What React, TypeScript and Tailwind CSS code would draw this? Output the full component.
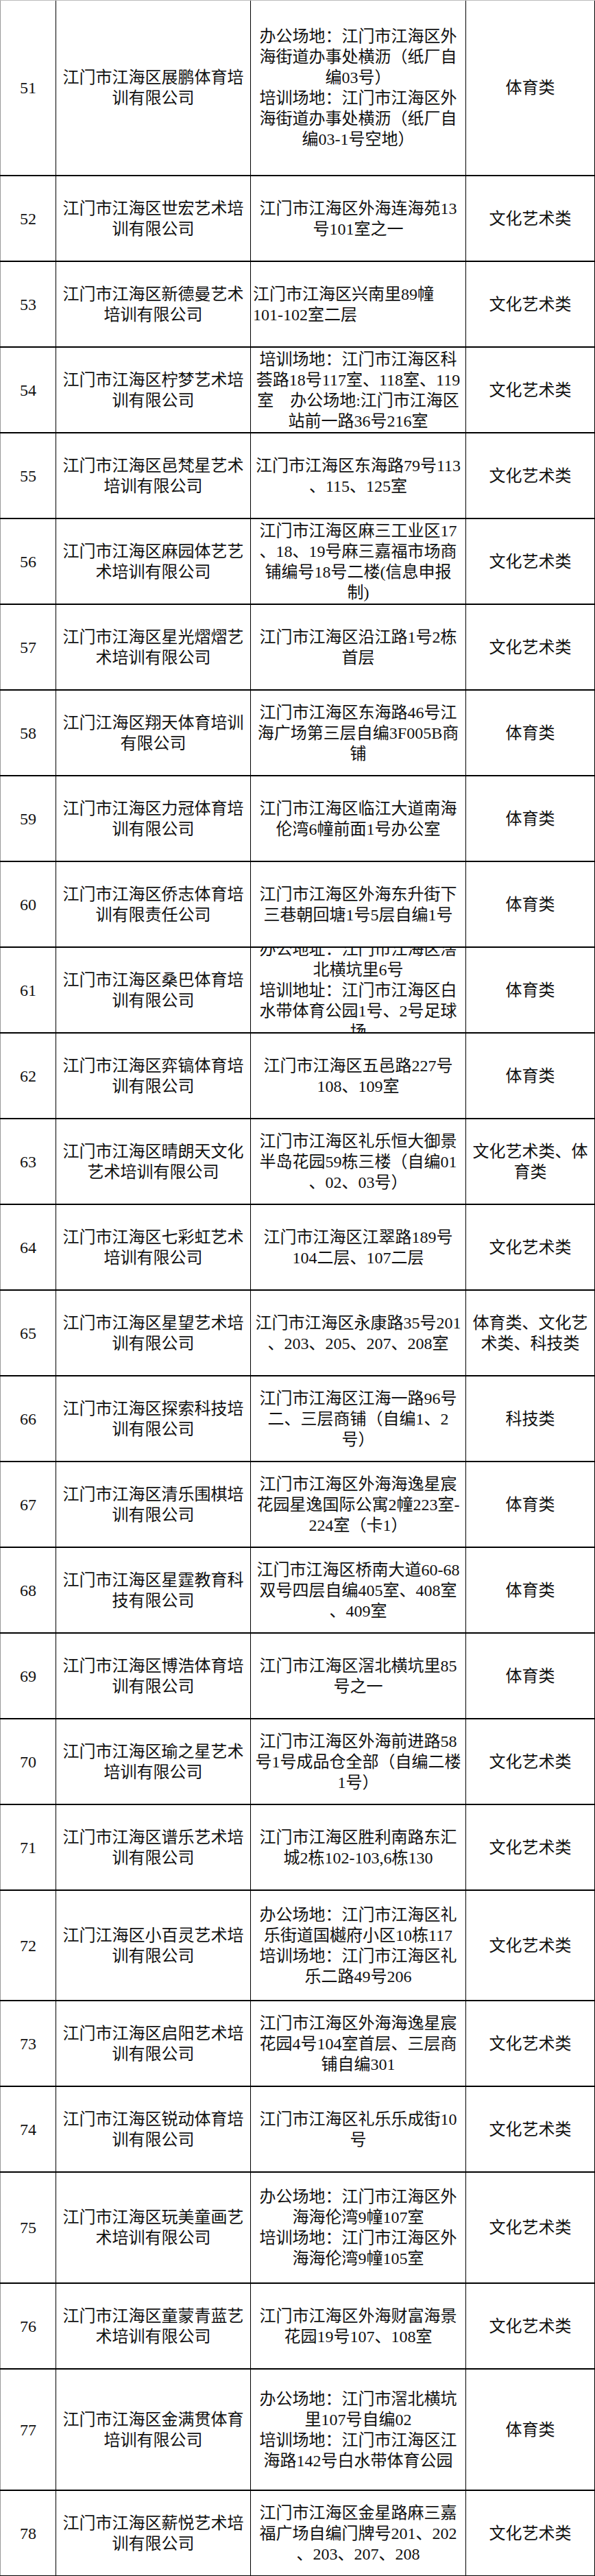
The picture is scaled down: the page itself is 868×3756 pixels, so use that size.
import React from "react";

// One row of the listing: number, company, address lines, category
interface Row {
  no: number;
  name: string[];
  addr: string[];
  cat: string[];
  h?: string;
  addrLeft?: boolean;
}

const rows: Row[] = [
  {
    no: 51,
    name: ["江门市江海区展鹏体育培", "训有限公司"],
    addr: [
      "办公场地：江门市江海区外",
      "海街道办事处横沥（纸厂自",
      "编03号）",
      "培训场地：江门市江海区外",
      "海街道办事处横沥（纸厂自",
      "编03-1号空地）",
    ],
    cat: ["体育类"],
    h: "h-[256px]",
  },
  { no: 52, name: ["江门市江海区世宏艺术培", "训有限公司"], addr: ["江门市江海区外海连海苑13", "号101室之一"], cat: ["文化艺术类"] },
  {
    no: 53,
    name: ["江门市江海区新德曼艺术", "培训有限公司"],
    addr: ["江门市江海区兴南里89幢", "101-102室二层"],
    cat: ["文化艺术类"],
    addrLeft: true,
  },
  {
    no: 54,
    name: ["江门市江海区柠梦艺术培", "训有限公司"],
    addr: ["培训场地：江门市江海区科", "荟路18号117室、118室、119", "室　办公场地:江门市江海区", "站前一路36号216室"],
    cat: ["文化艺术类"],
  },
  { no: 55, name: ["江门市江海区邑梵星艺术", "培训有限公司"], addr: ["江门市江海区东海路79号113", "、115、125室"], cat: ["文化艺术类"] },
  {
    no: 56,
    name: ["江门市江海区麻园体艺艺", "术培训有限公司"],
    addr: ["江门市江海区麻三工业区17", "、18、19号麻三嘉福市场商", "铺编号18号二楼(信息申报", "制)"],
    cat: ["文化艺术类"],
  },
  { no: 57, name: ["江门市江海区星光熠熠艺", "术培训有限公司"], addr: ["江门市江海区沿江路1号2栋", "首层"], cat: ["文化艺术类"] },
  {
    no: 58,
    name: ["江门江海区翔天体育培训", "有限公司"],
    addr: ["江门市江海区东海路46号江", "海广场第三层自编3F005B商", "铺"],
    cat: ["体育类"],
  },
  { no: 59, name: ["江门市江海区力冠体育培", "训有限公司"], addr: ["江门市江海区临江大道南海", "伦湾6幢前面1号办公室"], cat: ["体育类"] },
  { no: 60, name: ["江门市江海区侨志体育培", "训有限责任公司"], addr: ["江门市江海区外海东升街下", "三巷朝回塘1号5层自编1号"], cat: ["体育类"] },
  {
    no: 61,
    name: ["江门市江海区桑巴体育培", "训有限公司"],
    addr: ["办公地址：江门市江海区滘", "北横坑里6号", "培训地址：江门市江海区白", "水带体育公园1号、2号足球", "场"],
    cat: ["体育类"],
  },
  { no: 62, name: ["江门市江海区弈镐体育培", "训有限公司"], addr: ["江门市江海区五邑路227号", "108、109室"], cat: ["体育类"] },
  {
    no: 63,
    name: ["江门市江海区晴朗天文化", "艺术培训有限公司"],
    addr: ["江门市江海区礼乐恒大御景", "半岛花园59栋三楼（自编01", "、02、03号）"],
    cat: ["文化艺术类、体", "育类"],
  },
  { no: 64, name: ["江门市江海区七彩虹艺术", "培训有限公司"], addr: ["江门市江海区江翠路189号", "104二层、107二层"], cat: ["文化艺术类"] },
  {
    no: 65,
    name: ["江门市江海区星望艺术培", "训有限公司"],
    addr: ["江门市江海区永康路35号201", "、203、205、207、208室"],
    cat: ["体育类、文化艺", "术类、科技类"],
  },
  {
    no: 66,
    name: ["江门市江海区探索科技培", "训有限公司"],
    addr: ["江门市江海区江海一路96号", "二、三层商铺（自编1、2", "号）"],
    cat: ["科技类"],
  },
  {
    no: 67,
    name: ["江门市江海区清乐围棋培", "训有限公司"],
    addr: ["江门市江海区外海海逸星宸", "花园星逸国际公寓2幢223室-", "224室（卡1）"],
    cat: ["体育类"],
  },
  {
    no: 68,
    name: ["江门市江海区星霆教育科", "技有限公司"],
    addr: ["江门市江海区桥南大道60-68", "双号四层自编405室、408室", "、409室"],
    cat: ["体育类"],
  },
  { no: 69, name: ["江门市江海区博浩体育培", "训有限公司"], addr: ["江门市江海区滘北横坑里85", "号之一"], cat: ["体育类"] },
  {
    no: 70,
    name: ["江门市江海区瑜之星艺术", "培训有限公司"],
    addr: ["江门市江海区外海前进路58", "号1号成品仓全部（自编二楼", "1号）"],
    cat: ["文化艺术类"],
  },
  { no: 71, name: ["江门市江海区谱乐艺术培", "训有限公司"], addr: ["江门市江海区胜利南路东汇", "城2栋102-103,6栋130"], cat: ["文化艺术类"] },
  {
    no: 72,
    name: ["江门江海区小百灵艺术培", "训有限公司"],
    addr: ["办公场地：江门市江海区礼", "乐街道国樾府小区10栋117", "培训场地：江门市江海区礼", "乐二路49号206"],
    cat: ["文化艺术类"],
    h: "h-[161px]",
  },
  {
    no: 73,
    name: ["江门市江海区启阳艺术培", "训有限公司"],
    addr: ["江门市江海区外海海逸星宸", "花园4号104室首层、三层商", "铺自编301"],
    cat: ["文化艺术类"],
  },
  { no: 74, name: ["江门市江海区锐动体育培", "训有限公司"], addr: ["江门市江海区礼乐乐成街10", "号"], cat: ["文化艺术类"] },
  {
    no: 75,
    name: ["江门市江海区玩美童画艺", "术培训有限公司"],
    addr: ["办公场地：江门市江海区外", "海海伦湾9幢107室", "培训场地：江门市江海区外", "海海伦湾9幢105室"],
    cat: ["文化艺术类"],
    h: "h-[162px]",
  },
  { no: 76, name: ["江门市江海区童蒙青蓝艺", "术培训有限公司"], addr: ["江门市江海区外海财富海景", "花园19号107、108室"], cat: ["文化艺术类"] },
  {
    no: 77,
    name: ["江门市江海区金满贯体育", "培训有限公司"],
    addr: ["办公场地：江门市滘北横坑", "里107号自编02", "培训场地：江门市江海区江", "海路142号白水带体育公园"],
    cat: ["体育类"],
    h: "h-[177px]",
  },
  {
    no: 78,
    name: ["江门市江海区薪悦艺术培", "训有限公司"],
    addr: ["江门市江海区金星路麻三嘉", "福广场自编门牌号201、202", "、203、207、208"],
    cat: ["文化艺术类"],
  },
];

const Lines = ({ lines }: { lines: string[] }) => (
  <>
    {lines.map((l, i) => (
      <div key={i} className="whitespace-nowrap">
        {l}
      </div>
    ))}
  </>
);

export default function App() {
  return (
    <div className="w-[868px] bg-white text-[#111] font-['Liberation_Serif','Noto_Sans_CJK_SC',serif] text-[24px] leading-[30px]">
      <div className="border-t border-[#bbb]">
        {rows.map((r) => (
          <div key={r.no} className={`flex border-b-2 border-black ${r.h ?? "h-[125px]"}`}>
            <div className="w-[82px] shrink-0 border-l border-l-[#999] border-r border-r-black flex items-center justify-center">
              {r.no}
            </div>
            <div className="w-[284px] shrink-0 border-r border-black flex flex-col items-center justify-center overflow-hidden">
              <Lines lines={r.name} />
            </div>
            <div
              className={`w-[314px] shrink-0 border-r border-black flex flex-col justify-center overflow-hidden ${
                r.addrLeft ? "items-start pl-[3px]" : "items-center"
              }`}
            >
              <Lines lines={r.addr} />
            </div>
            <div className="w-[188px] shrink-0 border-r border-black flex flex-col items-center justify-center overflow-hidden">
              <Lines lines={r.cat} />
            </div>
          </div>
        ))}
      </div>
    </div>
  );
}
